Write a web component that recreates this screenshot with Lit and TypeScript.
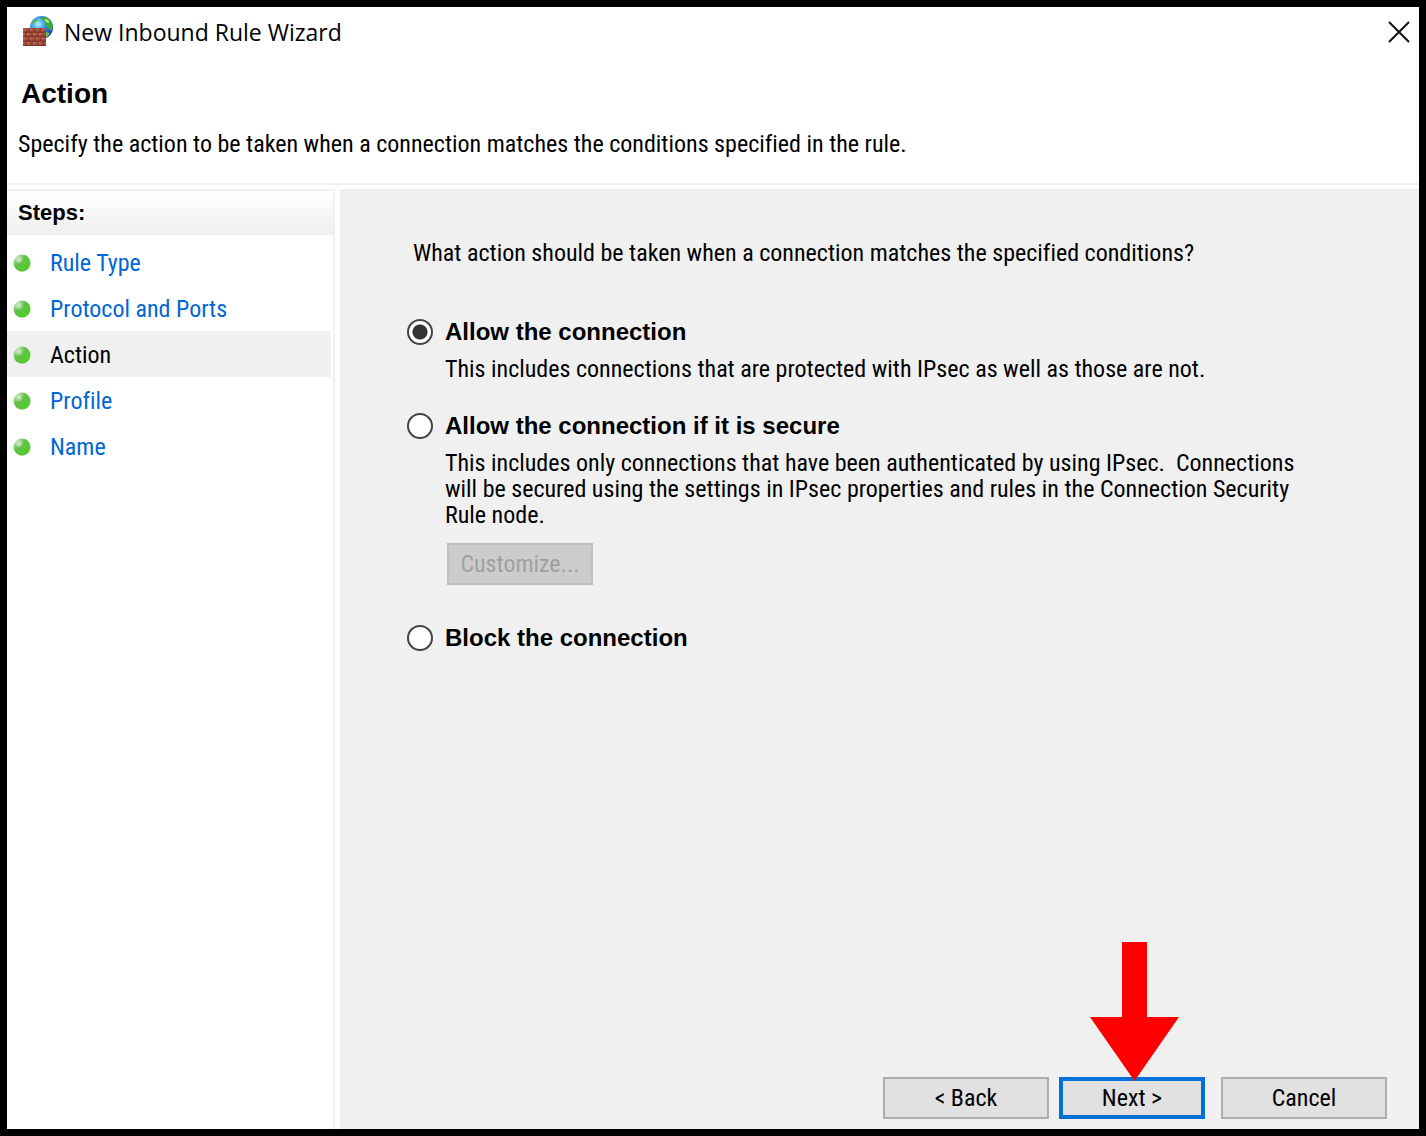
import { LitElement, html, css, svg } from "lit";
import { customElement, state } from "lit/decorators.js";

interface Step {
  id: string;
  label: string;
}

const STEPS: Step[] = [
  { id: "rule-type", label: "Rule Type" },
  { id: "ports", label: "Protocol and Ports" },
  { id: "action", label: "Action" },
  { id: "profile", label: "Profile" },
  { id: "name", label: "Name" },
];

const BRICK_ROWS = [0, 1, 2, 3];

@customElement("firewall-icon")
export class FirewallIcon extends LitElement {
  static styles = css`
    :host {
      display: block;
      width: 32px;
      height: 32px;
    }
    svg {
      display: block;
    }
  `;

  render() {
    return html`<svg width="32" height="32" viewBox="0 0 32 32" aria-hidden="true">
      <defs>
        <radialGradient id="sea" cx="0.35" cy="0.35" r="0.7">
          <stop offset="0" stop-color="#b5f0ff" />
          <stop offset="0.4" stop-color="#3fa0ee" />
          <stop offset="1" stop-color="#1238b4" />
        </radialGradient>
        <linearGradient id="brick" x1="0" y1="0" x2="1" y2="1">
          <stop offset="0" stop-color="#c97a63" />
          <stop offset="1" stop-color="#8a3324" />
        </linearGradient>
      </defs>
      <circle cx="19.5" cy="11.5" r="11.5" fill="url(#sea)" />
      <path d="M19 1.5c5-.8 9.5 2 11.2 6.5.8 2.6.2 5-.8 6.500-1.900-.2-3.200-1.500-3-3.300-2.200-.2-3.800-2-3-4 .6-1.500-1.600-1.600-2.700-2.700-1-1-1.900-2-1.700-3z" fill="#3fae35" />
      <path d="M22 3c2.500 0 4.500 1 5.500 3-1 1-2.500.8-3.500 0z" fill="#b9ee72" />
      <path d="M10 6.500c1.800-2.500 3.600-3.800 6-4.500-.2 2.200-2 3.400-3.200 4.600-1 1-1.800 1.600-2.800 2z" fill="#54b94b" />
      <path d="M24 16.500c1.600-.6 3 0 3.500 1.200-1 1.900-2 3-3.500 4z" fill="#5bbf4a" />
      <rect x="1" y="12" width="23" height="18" fill="#7a2d20" />
      ${BRICK_ROWS.map((r) => {
        const y = 12 + r * 4.5;
        const xs = r % 2 ? [1, 4.6, 10.6, 16.6, 22.4] : [1, 7.6, 13.6, 19.4];
        return xs.map((x, i) => {
          const end = i + 1 < xs.length ? xs[i + 1] - 0.8 : 24;
          return svg`<rect x=${x} y=${y + 0.3} width=${end - x} height="3.500" fill="url(#brick)" />`;
        });
      })}
    </svg>`;
  }
}

@customElement("step-bullet")
export class StepBullet extends LitElement {
  static styles = css`
    :host {
      display: block;
      width: 18px;
      height: 18px;
    }
    svg {
      display: block;
    }
  `;

  render() {
    return html`<svg width="18" height="18" viewBox="0 0 18 18" aria-hidden="true">
      <defs>
        <linearGradient id="ball" x1="0.1" y1="0.1" x2="0.8" y2="0.8">
          <stop offset="0" stop-color="#b4dca8" />
          <stop offset="0.45" stop-color="#62bf48" />
          <stop offset="1" stop-color="#4fce2a" />
        </linearGradient>
        <radialGradient id="shine">
          <stop offset="0" stop-color="#ffffff" stop-opacity="0.7" />
          <stop offset="1" stop-color="#ffffff" stop-opacity="0" />
        </radialGradient>
      </defs>
      <circle cx="9" cy="9" r="8.500" fill="url(#ball)" />
      <path d="M1.200 12.500a8.500 8.500 0 0 0 15.600 0a9 9 0 0 1-15.600 0z" fill="#4f9e37" opacity="0.6" />
      <circle cx="6" cy="5.500" r="5" fill="url(#shine)" />
    </svg>`;
  }
}

@customElement("app-root")
export class AppRoot extends LitElement {
  static styles = css`
    :host {
      display: block;
      color: #000;
      font: 24px/26px "Roboto Condensed", Roboto, "Liberation Sans", sans-serif;
      font-variant-ligatures: none;
    }
    * {
      box-sizing: border-box;
    }
    .window {
      display: flex;
      flex-direction: column;
      min-height: 100vh;
      border: 7px solid #000;
      background: #fff;
    }
    .titlebar {
      display: flex;
      align-items: center;
      gap: 10px;
      height: 50px;
      padding: 0 7px 0 15px;
    }
    .caption {
      flex: 1;
      font: 23px/32px "Open Sans", "Noto Sans", sans-serif;
    }
    .close {
      display: block;
      padding: 0;
      border: 0;
      background: none;
      width: 26px;
      height: 26px;
    }
    .close svg {
      display: block;
    }
    .intro {
      padding: 21px 11px 26px;
      border-bottom: 2px solid #f0f0f0;
    }
    .intro h1 {
      margin: 0 0 21px 3px;
      font: bold 28px/32px "Liberation Sans", Arial, sans-serif;
    }
    .intro p {
      margin: 0;
    }
    .body {
      flex: 1;
      display: grid;
      grid-template-columns: 328px 1fr;
      gap: 5px;
      padding-top: 4px;
    }
    .steps {
      border-top: 2px solid #f0f0f0;
      border-right: 2px solid #f0f0f0;
    }
    .steps h2 {
      margin: 0 0 4px;
      padding: 0 11px;
      font: bold 22px/44px "Liberation Sans", Arial, sans-serif;
      background: linear-gradient(#fff, #efefef);
    }
    .steps ol {
      margin: 0;
      padding: 0;
      list-style: none;
    }
    .step {
      display: flex;
      align-items: center;
      gap: 19px;
      height: 46px;
      margin-right: 2px;
      padding: 2px 0 0 6px;
      color: #0066d6;
      text-decoration: none;
    }
    .step.current {
      background: #f0f0f0;
      color: #000;
    }
    .panel {
      display: flex;
      flex-direction: column;
      padding-top: 51px;
      background: #f0f0f0;
    }
    .choices {
      flex: 1;
      margin: 0;
      padding: 0 67px;
      border: 0;
      min-width: 0;
    }
    .choices legend {
      padding: 0 0 0 6px;
      margin-bottom: 51px;
    }
    .choice {
      display: grid;
      grid-template-columns: 26px minmax(0, 864px);
      column-gap: 12px;
      row-gap: 9px;
      align-items: center;
      margin-bottom: 29px;
    }
    .choice.roomy {
      margin-bottom: 38px;
    }
    .choice input {
      appearance: none;
      width: 26px;
      height: 26px;
      margin: 0;
      border: 2px solid #444;
      border-radius: 50%;
      background: #fff;
    }
    .choice input:checked {
      background: radial-gradient(circle, #333 0 7px, #fff 8px);
    }
    .choice label {
      font: bold 24px/30px "Liberation Sans", Arial, sans-serif;
    }
    .detail {
      grid-column: 2;
      margin: 0;
    }
    button {
      font: inherit;
      color: inherit;
    }
    .btn {
      height: 42px;
      width: 166px;
      padding: 0;
      border: 2px solid #adadad;
      background: #e1e1e1;
    }
    .btn.small {
      width: 146px;
    }
    .btn.primary {
      border: 4px solid #0070d8;
    }
    .btn:disabled {
      grid-column: 2;
      margin: 6px 2px 0;
      border-color: #bfbfbf;
      background: #ccc;
      color: #a0a0a0;
    }
    .actions {
      display: flex;
      justify-content: flex-end;
      gap: 16px;
      padding: 0 32px 10px;
    }
    .pair {
      display: flex;
      gap: 10px;
    }
    .target {
      position: relative;
    }
    .pointer {
      position: absolute;
      left: 31px;
      bottom: 38px;
    }
  `;

  @state() private choice = "allow";

  private radio(value: string, label: string) {
    return html`<input
        type="radio"
        name="action"
        id=${value}
        .checked=${this.choice === value}
        @change=${() => (this.choice = value)}
      /><label for=${value}>${label}</label>`;
  }

  render() {
    return html`<main class="window">
      <header class="titlebar">
        <firewall-icon></firewall-icon>
        <span class="caption">New Inbound Rule Wizard</span>
        <button class="close" aria-label="Close">
          <svg width="26" height="26" viewBox="0 0 26 26" aria-hidden="true">
            <path d="M3 3l20 20M23 3L3 23" fill="none" stroke="#111" stroke-width="2" />
          </svg>
        </button>
      </header>
      <section class="intro">
        <h1>Action</h1>
        <p>Specify the action to be taken when a connection matches the conditions specified in the rule.</p>
      </section>
      <div class="body">
        <nav class="steps">
          <h2>Steps:</h2>
          <ol>
            ${STEPS.map(
              (s) => html`<li>
                <a class="step ${s.id === "action" ? "current" : ""}" href="#${s.id}"
                  ><step-bullet></step-bullet><span>${s.label}</span></a
                >
              </li>`
            )}
          </ol>
        </nav>
        <section class="panel">
          <fieldset class="choices">
            <legend>What action should be taken when a connection matches the specified conditions?</legend>
            <div class="choice">
              ${this.radio("allow", "Allow the connection")}
              <p class="detail">This includes connections that are protected with IPsec as well as those are not.</p>
            </div>
            <div class="choice roomy">
              ${this.radio("secure", "Allow the connection if it is secure")}
              <p class="detail">
                This includes only connections that have been authenticated by using IPsec.&nbsp; Connections will be
                secured using the settings in IPsec properties and rules in the Connection Security Rule node.
              </p>
              <button class="btn small" disabled>Customize...</button>
            </div>
            <div class="choice">${this.radio("block", "Block the connection")}</div>
          </fieldset>
          <footer class="actions">
            <div class="pair">
              <button class="btn">&lt; Back</button>
              <div class="target">
                <button class="btn small primary">Next &gt;</button>
                <svg class="pointer" width="89" height="139" viewBox="0 0 89 139" aria-hidden="true">
                  <path d="M32 0h25v75h32L44.5 139 0 75h32z" fill="#f00" />
                </svg>
              </div>
            </div>
            <button class="btn">Cancel</button>
          </footer>
        </section>
      </div>
    </main>`;
  }
}
